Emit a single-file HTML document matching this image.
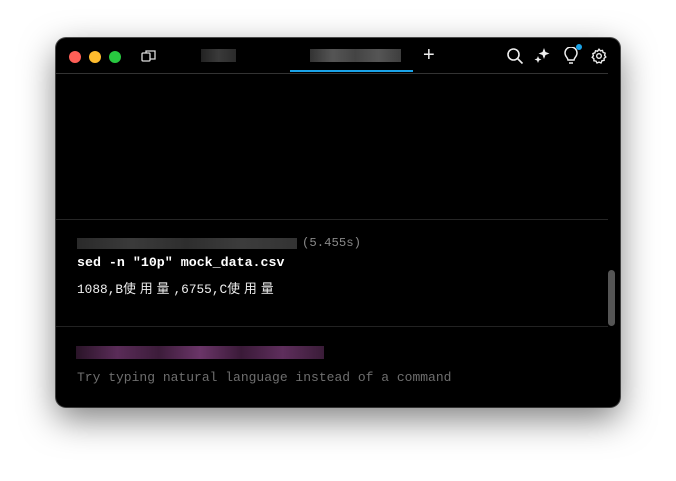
<!DOCTYPE html>
<html><head><meta charset="utf-8"><style>
body{margin:0;width:676px;height:481px;background:#fff;position:relative;overflow:hidden;font-family:"Liberation Mono","Noto Sans CJK SC",monospace}
.win{position:absolute;left:56px;top:38px;width:564px;height:369px;background:#000;border-radius:10px;box-shadow:0 12px 34px rgba(0,0,0,.5),0 0 0 1px #555;overflow:hidden}
.dot{position:absolute;top:13px;width:12px;height:12px;border-radius:50%}
.blur{position:absolute;height:13px}
.t{position:absolute;font-size:13.3px;white-space:pre}
.c{letter-spacing:4px}
</style></head><body>
<div class="win">
 <div class="dot" style="left:13px;background:#fe5f57"></div>
 <div class="dot" style="left:33px;background:#febc2e"></div>
 <div class="dot" style="left:53px;background:#28c840"></div>
 <svg style="position:absolute;left:85px;top:11px" width="16" height="14" viewBox="0 0 16 14" fill="none" stroke="#ddd" stroke-width="1.3"><rect x="1" y="4" width="8" height="8" rx="1"/><path d="M5 4V2h9v8h-5"/></svg>
 <div class="blur" style="left:145px;top:11px;width:35px;background:linear-gradient(90deg,#222,#3a3a3a,#2a2a2a)"></div>
 <div class="blur" style="left:254px;top:11px;width:91px;background:linear-gradient(90deg,#333,#555,#444,#555,#3e3e3e)"></div>
 <div style="position:absolute;left:234px;top:32px;width:123px;height:2px;background:#1aa3e8"></div>
 <div style="position:absolute;left:367px;top:6px;color:#eee;font:20px 'Liberation Sans',sans-serif">+</div>
 <svg style="position:absolute;left:450px;top:9px" width="18" height="18" viewBox="0 0 18 18" fill="none" stroke="#eee" stroke-width="1.6"><circle cx="7.5" cy="7.5" r="5.5"/><path d="M11.5 11.5l5 5"/></svg>
 <svg style="position:absolute;left:478px;top:9px" width="17" height="17" viewBox="0 0 17 17" fill="#eee"><path d="M10 1l1.5 4 4 1.5-4 1.5L10 12 8.5 8 4.5 6.5l4-1.5z"/><path d="M4 9l1 2.5 2.5 1-2.5 1L4 16l-1-2.5-2.5-1 2.5-1z"/></svg>
 <svg style="position:absolute;left:508px;top:9px" width="14" height="18" viewBox="0 0 14 18" fill="none" stroke="#eee" stroke-width="1.5"><path d="M4 13c0-2-3-3.5-3-7a6 6 0 0112 0c0 3.5-3 5-3 7z"/><path d="M5 16h4"/></svg>
 <div style="position:absolute;left:520px;top:6px;width:6px;height:6px;border-radius:50%;background:#1aa3e8"></div>
 <svg style="position:absolute;left:535px;top:10px" width="16" height="16" viewBox="0 0 16 16" fill="none" stroke="#eee" stroke-width="1.4"><circle cx="8" cy="8" r="2.3"/><path d="M8 1.2l1.4 1.6 2.1-.4.6 2 2 .8-.5 2.1 1.2 1.7-1.7 1.3v2.1l-2.1.3L10 15l-2-.9-2 .9-1-1.9-2.1-.3v-2.1L1.2 9.4l1.2-1.7-.5-2.1 2-.8.6-2 2.1.4z"/></svg>
 <div style="position:absolute;left:0;top:35px;width:552px;height:1px;background:#333"></div>
 <div style="position:absolute;left:0;top:181px;width:552px;height:1px;background:#262626"></div>
 <div class="blur" style="left:21px;top:200px;width:220px;height:11px;background:linear-gradient(90deg,#2a2a2a,#3a3a3a,#2e2e2e,#3c3c3c,#333)"></div>
 <div class="t" style="left:246px;top:198px;color:#888;font-size:12.3px">(5.455s)</div>
 <div class="t" style="left:21px;top:217px;color:#fff;font-weight:bold">sed -n "10p" mock_data.csv</div>
 <div class="t" style="left:21px;top:240px;color:#eee;font-size:12.8px">1088,B<span class="c">使用量</span>,6755,C<span class="c">使用量</span></div>
 <div style="position:absolute;left:552px;top:232px;width:7px;height:56px;border-radius:4px;background:#555"></div>
 <div style="position:absolute;left:0;top:288px;width:552px;height:1px;background:#222"></div>
 <div class="blur" style="left:20px;top:308px;width:248px;height:13px;background:linear-gradient(90deg,#2a1428,#5a2c58,#3c1c3a,#6a3568,#3a1a38,#5e2e5c,#3a1c38)"></div>
 <div class="t" style="left:21px;top:332px;color:#6e6e6e;font-size:13px">Try typing natural language instead of a command</div>
</div>
</body></html>
